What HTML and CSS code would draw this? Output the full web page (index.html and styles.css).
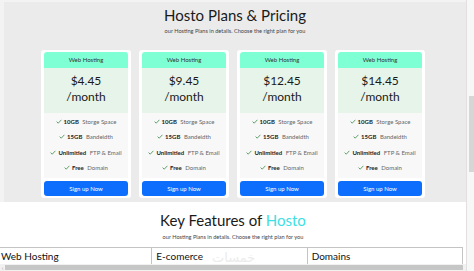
FILE: index.html
```html
<!DOCTYPE html>
<html lang="en">
<head>
  <meta charset="UTF-8" />
  <meta name="viewport" content="width=device-width, initial-scale=1.0"/>
  <title>Hosto Plans &amp; Pricing</title>
  <link rel="stylesheet" href="styles.css">
</head>
<body>
  <div class="screen">
    <div class="viewport">

      <section class="plans">
        <h1 class="title">Hosto Plans &amp; Pricing</h1>
        <p class="lead">our Hosting Plans in details. Choose the right plan for you</p>

        <div class="cards">
          <div class="card">
            <div class="card-head">Web Hosting</div>
            <div class="card-price">$4.45<br/>/month</div>
            <ul class="card-list">
              <li><svg class="check" viewBox="0 0 10 8"><polyline points="1,4.2 3.7,6.8 9,1.2"/></svg><b>10GB</b> Storge Space</li>
              <li><svg class="check" viewBox="0 0 10 8"><polyline points="1,4.2 3.7,6.8 9,1.2"/></svg><b>15GB</b> Bandeidth</li>
              <li><svg class="check" viewBox="0 0 10 8"><polyline points="1,4.2 3.7,6.8 9,1.2"/></svg><b>Unlimitied</b> FTP &amp; Email</li>
              <li><svg class="check" viewBox="0 0 10 8"><polyline points="1,4.2 3.7,6.8 9,1.2"/></svg><b>Free</b> Domain</li>
            </ul>
            <button class="btn-sign">Sign up Now</button>
          </div>

          <div class="card">
            <div class="card-head">Web Hosting</div>
            <div class="card-price">$9.45<br/>/month</div>
            <ul class="card-list">
              <li><svg class="check" viewBox="0 0 10 8"><polyline points="1,4.2 3.7,6.8 9,1.2"/></svg><b>10GB</b> Storge Space</li>
              <li><svg class="check" viewBox="0 0 10 8"><polyline points="1,4.2 3.7,6.8 9,1.2"/></svg><b>15GB</b> Bandeidth</li>
              <li><svg class="check" viewBox="0 0 10 8"><polyline points="1,4.2 3.7,6.8 9,1.2"/></svg><b>Unlimitied</b> FTP &amp; Email</li>
              <li><svg class="check" viewBox="0 0 10 8"><polyline points="1,4.2 3.7,6.8 9,1.2"/></svg><b>Free</b> Domain</li>
            </ul>
            <button class="btn-sign">Sign up Now</button>
          </div>

          <div class="card">
            <div class="card-head">Web Hosting</div>
            <div class="card-price">$12.45<br/>/month</div>
            <ul class="card-list">
              <li><svg class="check" viewBox="0 0 10 8"><polyline points="1,4.2 3.7,6.8 9,1.2"/></svg><b>10GB</b> Storge Space</li>
              <li><svg class="check" viewBox="0 0 10 8"><polyline points="1,4.2 3.7,6.8 9,1.2"/></svg><b>15GB</b> Bandeidth</li>
              <li><svg class="check" viewBox="0 0 10 8"><polyline points="1,4.2 3.7,6.8 9,1.2"/></svg><b>Unlimitied</b> FTP &amp; Email</li>
              <li><svg class="check" viewBox="0 0 10 8"><polyline points="1,4.2 3.7,6.8 9,1.2"/></svg><b>Free</b> Domain</li>
            </ul>
            <button class="btn-sign">Sign up Now</button>
          </div>

          <div class="card">
            <div class="card-head">Web Hosting</div>
            <div class="card-price">$14.45<br/>/month</div>
            <ul class="card-list">
              <li><svg class="check" viewBox="0 0 10 8"><polyline points="1,4.2 3.7,6.8 9,1.2"/></svg><b>10GB</b> Storge Space</li>
              <li><svg class="check" viewBox="0 0 10 8"><polyline points="1,4.2 3.7,6.8 9,1.2"/></svg><b>15GB</b> Bandeidth</li>
              <li><svg class="check" viewBox="0 0 10 8"><polyline points="1,4.2 3.7,6.8 9,1.2"/></svg><b>Unlimitied</b> FTP &amp; Email</li>
              <li><svg class="check" viewBox="0 0 10 8"><polyline points="1,4.2 3.7,6.8 9,1.2"/></svg><b>Free</b> Domain</li>
            </ul>
            <button class="btn-sign">Sign up Now</button>
          </div>
        </div>
      </section>

      <section class="features">
        <h2 class="title">Key Features of <span class="brand">Hosto</span></h2>
        <p class="lead">our Hosting Plans in details. Choose the right plan for you</p>
        <div class="feature-table">
          <div class="cell">Web Hosting</div>
          <div class="cell">E-comerce</div>
          <div class="cell">Domains</div>
        </div>
        <span class="watermark">خمسات</span>
      </section>

      <div class="hscroll">
        <span class="arrow">‹</span>
        <div class="hthumb"></div>
      </div>
    </div>

    <div class="vscroll">
      <div class="vthumb"></div>
    </div>
  </div>
</body>
</html>
```

FILE: styles.css
```css
* {
  box-sizing: border-box;
}
body {
  margin: 0;
  font-family: Lato, "Open Sans", sans-serif;
  color: #222;
  background: #fff;
}
.screen {
  display: flex;
  width: 474px;
  height: 271px;
  overflow: hidden;
}
.viewport {
  width: 466px;
  display: flex;
  flex-direction: column;
}

/* plans section */
.plans {
  height: 202px;
  background-color: #ebebeb;
  border-left: 4px solid #f3f3f3;
  border-top: 2px solid #f3f3f3;
  padding-top: 3px;
}
.title {
  margin: 0;
  font-size: 15px;
  font-weight: 400;
  line-height: 20px;
  text-align: center;
  color: #1a1a1a;
}
.lead {
  margin: 2px 0 0;
  font-size: 5.6px;
  line-height: 8px;
  text-align: center;
  color: #444;
}
.cards {
  display: flex;
  justify-content: center;
  gap: 8px;
  margin-top: 15px;
  margin-left: -4px;
}
.card {
  width: 90px;
  background: #fff;
  border-radius: 3px;
  padding: 2px 3px 2px;
  display: flex;
  flex-direction: column;
}
.card-head {
  height: 16px;
  line-height: 16px;
  background-color: #7fffd4;
  border-radius: 3px 3px 0 0;
  font-size: 6px;
  text-align: center;
  color: #333;
}
.card-price {
  height: 45px;
  padding-top: 5px;
  background-color: #e6f4ea;
  font-size: 12px;
  line-height: 16px;
  text-align: center;
  color: #1a1a1a;
}
.card-list {
  list-style: none;
  margin: 0;
  padding: 0.5px 0 3px;
  height: 65px;
  background-color: #f8f8f8;
}
.card-list li {
  display: flex;
  align-items: center;
  justify-content: center;
  gap: 2px;
  height: 15.5px;
  font-size: 6px;
  color: #666;
}
.card-list b {
  color: #222;
  margin-right: 1.5px;
}
.check {
  width: 6px;
  height: 5px;
  fill: none;
  stroke: #3f8f4f;
  stroke-width: 1.4;
}
.btn-sign {
  margin-top: 3px;
  height: 15px;
  padding: 0;
  border: none;
  border-radius: 3px;
  background-color: #0d6efd;
  color: #fff;
  font-family: inherit;
  font-size: 6px;
}

/* features section */
.features {
  position: relative;
  height: 62px;
  overflow: hidden;
  background: #fff;
  padding-top: 8px;
}
.brand {
  color: #3ee0e3;
}
.features .lead {
  margin-top: 3px;
}
.feature-table {
  display: flex;
  margin-top: 6px;
  margin-left: -4px;
  width: 467px;
  border-top: 1px solid #c4c4c4;
  border-left: 1px solid #c4c4c4;
}
.cell {
  flex: 1;
  height: 20px;
  padding: 2px 4px;
  border-right: 1px solid #c4c4c4;
  font-size: 10px;
  line-height: 13px;
  color: #111;
}
.watermark {
  position: absolute;
  left: 212px;
  top: 48px;
  font-family: "DejaVu Sans", sans-serif;
  font-size: 13px;
  color: #ececec;
}

/* fake scrollbars */
.hscroll {
  height: 7px;
  display: flex;
  align-items: center;
  background: #f1f1f1;
}
.arrow {
  width: 5px;
  font-size: 6px;
  line-height: 7px;
  color: #999;
  text-align: center;
}
.hthumb {
  width: 458px;
  height: 5px;
  background: #c6c6c6;
}
.vscroll {
  width: 8px;
  background: #f7f7f7;
  border-left: 1px solid #e0e0e0;
  padding-top: 96px;
}
.vthumb {
  width: 5px;
  height: 76px;
  margin-left: 2px;
  background: #d6d6d6;
}
```
